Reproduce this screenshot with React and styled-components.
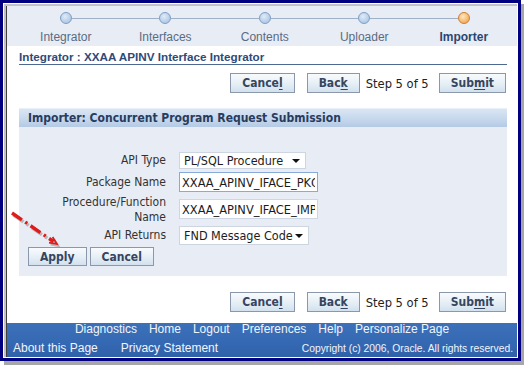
import React from "react";
import styled, { createGlobalStyle } from "styled-components";

const TAHOMA = `"DejaVu Sans Condensed", "DejaVu Sans", Verdana, sans-serif`;
const ARIAL = `"Liberation Sans", Arial, Helvetica, sans-serif`;

const GlobalStyle = createGlobalStyle`
  html, body { margin: 0; padding: 0; background: #ffffff; }
  #root { width: 524px; height: 366px; }
`;

const Stage = styled.div`
  position: relative;
  width: 524px;
  height: 366px;
  overflow: hidden;
  background: #ffffff;
`;

const Frame = styled.div`
  box-sizing: border-box;
  width: 521px;
  height: 361px;
  border: 3px solid #000080;
  box-shadow: 4px 4px 0 #a7a7a7;
  background: #ffffff;
`;

const Bevel = styled.div`
  box-sizing: border-box;
  height: 100%;
  border: 1px solid #ffffff;
  display: flex;
`;

const Recess = styled.div`
  flex: 1;
  min-width: 0;
  display: flex;
  border-top: 2px solid #c3c3c3;
  border-left: 2px solid #c3c3c3;
`;

const Content = styled.div`
  flex: 1;
  min-width: 0;
  display: flex;
  flex-direction: column;
  border-left: 1px solid #3f3f3f;
  background: #ffffff;
`;

/* ---------- train ---------- */
const Train = styled.div`
  box-sizing: border-box;
  height: 40px;
  padding-left: 9px;
  background: #e8edf5;
  display: grid;
  grid-template-columns: repeat(5, 99.5px);
`;

const Stop = styled.div`
  display: flex;
  flex-direction: column;
`;

const Track = styled.div`
  display: flex;
  align-items: center;
  height: 12px;
  margin-top: 6px;
`;

const Rail = styled.div`
  flex: 1;
  height: 1px;
  background: ${(p) => (p.$hidden ? "transparent" : "#9eb1c9")};
`;

const Dot = styled.span`
  box-sizing: border-box;
  width: 12px;
  height: 12px;
  border-radius: 50%;
  border: 1px solid ${(p) => (p.$active ? "#cd7f30" : "#7e9ec5")};
  background: ${(p) =>
    p.$active
      ? "radial-gradient(circle at 40% 35%, #fee6c4 0%, #f6b86c 60%, #ee9a45 100%)"
      : "radial-gradient(circle at 40% 35%, #e0ebf7 0%, #b8cfe9 60%, #a4c0e2 100%)"};
`;

const StopLabel = styled.div`
  margin-top: 7px;
  text-align: center;
  font-family: ${ARIAL};
  font-size: 12px;
  line-height: 13px;
  font-weight: ${(p) => (p.$active ? "bold" : "normal")};
  color: ${(p) => (p.$active ? "#2c4570" : "#5b6b82")};
  white-space: nowrap;
`;

/* ---------- main ---------- */
const Main = styled.div`
  padding: 0 10px 0 12px;
  display: flex;
  flex-direction: column;
`;

const PageTitle = styled.h1`
  margin: 3px 0 0;
  font-family: ${ARIAL};
  font-size: 11.7px;
  line-height: 15px;
  font-weight: bold;
  color: #2f4a77;
  border-bottom: 1px solid #4d6891;
`;

const ButtonBar = styled.div`
  display: flex;
  justify-content: flex-end;
  align-items: center;
  height: 20px;
  margin-top: ${(p) => p.$mt}px;
  padding-right: 1px;
`;

const Button = styled.button`
  box-sizing: border-box;
  height: ${(p) => p.$h || 20}px;
  margin: 0 0 0 ${(p) => p.$ml || 0}px;
  padding: 0 11px;
  border: 1px solid #8b98ab;
  border-radius: 0;
  background: linear-gradient(#f8fbfd 0%, #e9f1f7 45%, #d2e1ee 100%);
  font-family: ${TAHOMA};
  font-stretch: condensed;
  font-size: 12px;
  font-weight: bold;
  line-height: 16px;
  color: #36455f;
  cursor: pointer;
  u { text-decoration: underline; text-underline-offset: 2px; }
`;

const StepText = styled.span`
  margin: 0 10px 0 6px;
  font-family: ${TAHOMA};
  font-stretch: condensed;
  font-size: 12.8px;
  color: #222222;
  white-space: nowrap;
`;

const SectionHeader = styled.h2`
  box-sizing: border-box;
  margin: 15px 0 0;
  height: 19px;
  padding-left: 9px;
  border-top: 1px solid #e9f0f9;
  background: linear-gradient(#d9e5f4 0%, #c6d8ed 55%, #b4cae4 100%);
  font-family: ${TAHOMA};
  font-stretch: condensed;
  font-size: 12px;
  line-height: 18px;
  font-weight: bold;
  color: #283c5d;
  white-space: nowrap;
`;

const PanelBody = styled.div`
  box-sizing: border-box;
  height: 149px;
  padding: 25px 0 10px;
  background: #e8edf5;
`;

const Form = styled.div`
  display: grid;
  grid-template-columns: 147px max-content;
  column-gap: 13px;
  row-gap: 3px;
  align-items: center;
`;

const Label = styled.label`
  text-align: right;
  font-family: ${TAHOMA};
  font-stretch: condensed;
  font-size: 12px;
  line-height: 15px;
  color: #333333;
  ${(p) => (p.$wrap ? "align-self: start; margin-bottom: -2px;" : "")}
`;

const FakeSelect = styled.div`
  box-sizing: border-box;
  display: flex;
  align-items: center;
  justify-content: space-between;
  width: ${(p) => p.$w}px;
  height: ${(p) => p.$h}px;
  padding: 0 5px 0 4px;
  background: #ffffff;
  border: 1px solid #cdd5e0;
  font-family: ${TAHOMA};
  font-stretch: condensed;
  font-size: 12.5px;
  color: #1d1d1d;
  white-space: nowrap;
  overflow: hidden;
`;

const Caret = styled.span`
  flex: none;
  width: 0;
  height: 0;
  border-left: 4px solid transparent;
  border-right: 4px solid transparent;
  border-top: 4px solid #111111;
`;

const TextInput = styled.input`
  box-sizing: border-box;
  width: 139px;
  height: ${(p) => p.$h}px;
  padding: 0 2px;
  margin: 0;
  border: 1px solid ${(p) => (p.$focus ? "#86abda" : "#cdd6e2")};
  border-radius: 0;
  background: #ffffff;
  font-family: ${TAHOMA};
  font-stretch: condensed;
  font-size: 12.7px;
  color: #1b1b1b;
  outline: none;
`;

const InlineActions = styled.div`
  display: flex;
  gap: 3px;
  margin: 2px 0 0 9px;
`;

/* ---------- footer ---------- */
const Footer = styled.footer`
  box-sizing: border-box;
  margin-top: auto;
  height: 34px;
  background: linear-gradient(#3c71ba 0%, #3568b2 60%, #2f61a9 100%);
  font-family: ${ARIAL};
  color: #f1f5fb;
`;

const FooterNav = styled.nav`
  display: flex;
  justify-content: center;
  gap: 12px;
  font-size: 12px;
  line-height: 13px;
`;

const FooterMeta = styled.div`
  display: flex;
  align-items: baseline;
  gap: 23px;
  margin-top: 6px;
  padding: 0 4px 0 6px;
  font-size: 12px;
  line-height: 13px;
`;

const FooterLink = styled.a`
  color: inherit;
  text-decoration: none;
  white-space: nowrap;
`;

const Copyright = styled.span`
  margin-left: auto;
  font-size: 10.3px;
  white-space: nowrap;
`;

const Annotation = styled.svg`
  position: absolute;
  left: 0;
  top: 200px;
  width: 70px;
  height: 60px;
  pointer-events: none;
  overflow: visible;
`;

const steps = ["Integrator", "Interfaces", "Contents", "Uploader", "Importer"];

function Arrow({ color, dx = 0, dy = 0, opacity = 1 }) {
  return (
    <g transform={`translate(${dx} ${dy})`} opacity={opacity}>
      <line
        x1="12"
        y1="213"
        x2="53.5"
        y2="241.5"
        stroke={color}
        strokeWidth="3.4"
        strokeDasharray="12 4 2.5 4"
      />
      <polyline
        points="49,242.6 57,244 52.6,237"
        fill="none"
        stroke={color}
        strokeWidth="1.7"
        strokeLinejoin="miter"
      />
    </g>
  );
}

function Actions({ mt }) {
  return (
    <ButtonBar $mt={mt}>
      <Button>
        Cance<u>l</u>
      </Button>
      <Button $ml={12}>
        Bac<u>k</u>
      </Button>
      <StepText>Step 5 of 5</StepText>
      <Button>
        Sub<u>m</u>it
      </Button>
    </ButtonBar>
  );
}

export default function App() {
  return (
    <Stage>
      <GlobalStyle />
      <Frame>
        <Bevel>
          <Recess>
            <Content>
              <Train>
                {steps.map((s, i) => (
                  <Stop key={s}>
                    <Track>
                      <Rail $hidden={i === 0} />
                      <Dot $active={i === steps.length - 1} />
                      <Rail $hidden={i === steps.length - 1} />
                    </Track>
                    <StopLabel $active={i === steps.length - 1}>{s}</StopLabel>
                  </Stop>
                ))}
              </Train>

              <Main>
                <PageTitle>Integrator : XXAA APINV Interface Integrator</PageTitle>
                <Actions mt={8} />

                <SectionHeader>
                  Importer: Concurrent Program Request Submission
                </SectionHeader>
                <PanelBody>
                  <Form>
                    <Label>API Type</Label>
                    <FakeSelect $w={127} $h={17}>
                      PL/SQL Procedure <Caret />
                    </FakeSelect>

                    <Label>Package Name</Label>
                    <TextInput $h={20} $focus readOnly value="XXAA_APINV_IFACE_PKG" />

                    <Label $wrap>
                      Procedure/Function
                      <br />
                      Name
                    </Label>
                    <TextInput $h={20} readOnly value="XXAA_APINV_IFACE_IMPORT" />

                    <Label>API Returns</Label>
                    <FakeSelect $w={130} $h={19}>
                      FND Message Code <Caret />
                    </FakeSelect>
                  </Form>
                  <InlineActions>
                    <Button $h={19}>Apply</Button>
                    <Button $h={19}>Cancel</Button>
                  </InlineActions>
                </PanelBody>

                <Actions mt={16} />
              </Main>

              <Footer>
                <FooterNav>
                  <FooterLink>Diagnostics</FooterLink>
                  <FooterLink>Home</FooterLink>
                  <FooterLink>Logout</FooterLink>
                  <FooterLink>Preferences</FooterLink>
                  <FooterLink>Help</FooterLink>
                  <FooterLink>Personalize Page</FooterLink>
                </FooterNav>
                <FooterMeta>
                  <FooterLink>About this Page</FooterLink>
                  <FooterLink>Privacy Statement</FooterLink>
                  <Copyright>Copyright (c) 2006, Oracle. All rights reserved.</Copyright>
                </FooterMeta>
              </Footer>
            </Content>
          </Recess>
        </Bevel>
      </Frame>
      <Annotation viewBox="0 200 70 60">
        <Arrow color="#8a8a8a" dx={1.5} dy={2} opacity={0.55} />
        <Arrow color="#e01b1b" />
      </Annotation>
    </Stage>
  );
}
